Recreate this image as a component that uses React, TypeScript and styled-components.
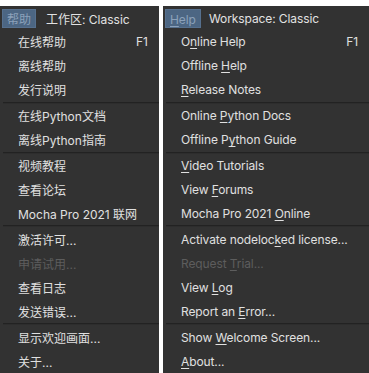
import React from 'react'
import styled, { createGlobalStyle } from 'styled-components'

const GlobalStyle = createGlobalStyle`
  html, body {
    margin: 0;
    padding: 0;
    background: #ffffff;
  }
  body {
    font-family: Inter, "Noto Sans CJK SC", sans-serif;
    -webkit-font-smoothing: antialiased;
  }
`

const Page = styled.div`
  display: flex;
  gap: 4px;
  padding-top: 6px;
  width: 369px;
  height: 373px;
  overflow: hidden;
  box-sizing: border-box;
`

const Panel = styled.div<{ $width: number; $tracking?: number }>`
  width: ${p => p.$width}px;
  flex: none;
  background: #323232;
  display: flex;
  flex-direction: column;
  letter-spacing: ${p => p.$tracking ?? 0}px;
`

const MenuBar = styled.div`
  height: 24px;
  display: flex;
  align-items: center;
  padding-top: 1px;
  box-sizing: border-box;
`

const MenuSlot = styled.div`
  width: 46px;
  flex: none;
  display: flex;
  padding-left: 2px;
  box-sizing: border-box;
`

const ActiveMenu = styled.div`
  height: 19px;
  padding: 0 4px;
  background: #4c6683;
  color: #8ba1ba;
  font-size: 12px;
  line-height: 19px;
  border: 1px solid #56708e;
  box-sizing: border-box;
`

const BarLabel = styled.div`
  color: #e2e2e2;
  font-size: 12px;
`

const Item = styled.div<{ $disabled?: boolean }>`
  height: 24px;
  display: flex;
  align-items: center;
  justify-content: space-between;
  padding: 0 11px 0 18px;
  color: ${p => (p.$disabled ? '#5d5d5d' : '#e0e0e0')};
  font-size: 12px;
  white-space: nowrap;
`

const Shortcut = styled.span`
  color: #e0e0e0;
`

const Separator = styled.div`
  height: 2px;
  margin-left: 3px;
  border-top: 1px solid #222222;
  background: #2d2d2d;
  box-sizing: border-box;
`

const Key = styled.span`
  text-decoration: underline;
  text-underline-offset: 2px;
  text-decoration-thickness: 1px;
`

type Entry = { label: React.ReactNode; shortcut?: string; disabled?: boolean } | 'sep'

const u = (before: string, key: string, after: string) => (
  <>
    {before}
    <Key>{key}</Key>
    {after}
  </>
)

const chinese: Entry[] = [
  { label: '在线帮助', shortcut: 'F1' },
  { label: '离线帮助' },
  { label: '发行说明' },
  'sep',
  { label: '在线Python文档' },
  { label: '离线Python指南' },
  'sep',
  { label: '视频教程' },
  { label: '查看论坛' },
  { label: 'Mocha Pro 2021 联网' },
  'sep',
  { label: '激活许可...' },
  { label: '申请试用...', disabled: true },
  { label: '查看日志' },
  { label: '发送错误...' },
  'sep',
  { label: '显示欢迎画面...' },
  { label: '关于...' },
]

const english: Entry[] = [
  { label: u('O', 'n', 'line Help'), shortcut: 'F1' },
  { label: u('Offline ', 'H', 'elp') },
  { label: u('', 'R', 'elease Notes') },
  'sep',
  { label: u('Online ', 'P', 'ython Docs') },
  { label: u('Offline P', 'y', 'thon Guide') },
  'sep',
  { label: u('', 'V', 'ideo Tutorials') },
  { label: u('View ', 'F', 'orums') },
  { label: u('Mocha Pro 2021 ', 'O', 'nline') },
  'sep',
  { label: u('Activate nodeloc', 'k', 'ed license...') },
  { label: u('Request ', 'T', 'rial...'), disabled: true },
  { label: u('View ', 'L', 'og') },
  { label: u('Report an ', 'E', 'rror...') },
  'sep',
  { label: u('Show ', 'W', 'elcome Screen...') },
  { label: u('', 'A', 'bout...') },
]

const Menu = ({ width, tracking, title, label, entries }: { width: number; tracking?: number; title: React.ReactNode; label: string; entries: Entry[] }) => (
  <Panel $width={width} $tracking={tracking}>
    <MenuBar>
      <MenuSlot>
        <ActiveMenu>{title}</ActiveMenu>
      </MenuSlot>
      <BarLabel>{label}</BarLabel>
    </MenuBar>
    {entries.map((e, i) =>
      e === 'sep' ? (
        <Separator key={i} />
      ) : (
        <Item key={i} $disabled={e.disabled}>
          <span>{e.label}</span>
          {e.shortcut && <Shortcut>{e.shortcut}</Shortcut>}
        </Item>
      )
    )}
  </Panel>
)

export default function App() {
  return (
    <>
      <GlobalStyle />
      <Page>
        <Menu width={159} title="帮助" label="工作区: Classic" entries={chinese} />
        <Menu width={206} tracking={-0.1} title={u('', 'H', 'elp')} label="Workspace: Classic" entries={english} />
      </Page>
    </>
  )
}
